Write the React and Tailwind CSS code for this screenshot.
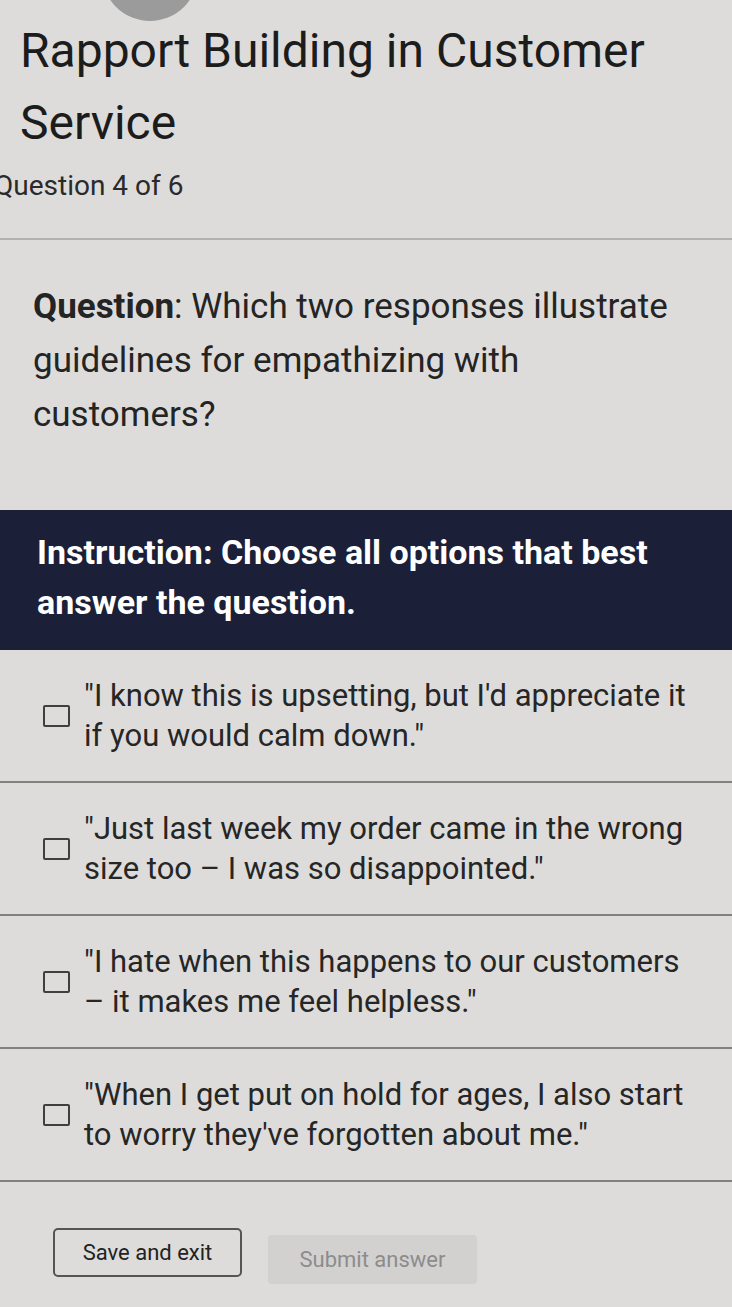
import React from "react";

const options = [
  ["\"I know this is upsetting, but I'd appreciate it", "if you would calm down.\""],
  ["\"Just last week my order came in the wrong", "size too \u2013 I was so disappointed.\""],
  ["\"I hate when this happens to our customers", "\u2013 it makes me feel helpless.\""],
  ["\"When I get put on hold for ages, I also start", "to worry they've forgotten about me.\""],
];

export default function App() {
  return (
    <div
      className="relative w-[732px] min-h-[1307px] overflow-hidden bg-[#dddcdb] text-[#222222]"
      style={{ fontFamily: "Roboto, 'Liberation Sans', sans-serif" }}
    >
      <div className="absolute left-[102px] top-[-75px] h-[96px] w-[96px] rounded-full bg-[#9c9b9b]" />

      <div className="pt-[15px] pl-[20px]">
        <h1 className="text-[48px] leading-[72px] font-normal text-[#1c1c1c]">
          Rapport Building in Customer
          <br />
          Service
        </h1>
      </div>
      <p className="mt-[9px] -ml-[6px] text-[28px] leading-[36px] text-[#2a2a2a]">Question 4 of 6</p>

      <div className="mt-[34px] h-[2px] bg-[#b3b2b1]" />

      <div className="pt-[40px] pb-[68px] pl-[33px] pr-[10px]">
        <p className="text-[35px] leading-[54px] text-[#242424]">
          <span className="font-bold">Question</span>: Which two responses illustrate
          <br />
          guidelines for empathizing with
          <br />
          customers?
        </p>
      </div>

      <div className="bg-[#1b2038] pt-[17px] pb-[23px] pl-[37px] pr-[10px]">
        <p className="text-[34px] leading-[50px] font-bold text-white whitespace-nowrap">
          Instruction: Choose all options that best
          <br />
          answer the question.
        </p>
      </div>

      <div className="flex flex-col">
        {options.map((lines, i) => (
          <div key={i}>
            <div className="flex items-center pt-[26px] pb-[25px]">
              <div className="ml-[43px] mr-[14px] h-[22px] w-[27px] shrink-0 rounded-[2px] border-2 border-[#3f3f3f]" />
              <p className="text-[31px] leading-[40px] text-[#262626] whitespace-nowrap">
                {lines[0]}
                <br />
                {lines[1]}
              </p>
            </div>
            <div className="h-[2px] bg-[#828181]" />
          </div>
        ))}
      </div>

      <div className="mt-[46px] flex items-start">
        <button className="ml-[53px] h-[49px] w-[189px] rounded-[5px] border-2 border-[#555555] text-[22px] text-[#222222]">
          Save and exit
        </button>
        <button className="ml-[26px] mt-[7px] h-[49px] w-[209px] rounded-[4px] bg-[#d2d1d0] text-[22px] text-[#8d8c8c]">
          Submit answer
        </button>
      </div>
    </div>
  );
}
